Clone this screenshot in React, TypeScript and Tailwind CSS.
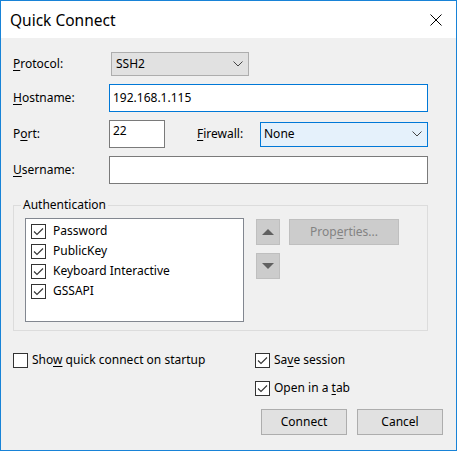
import type { ReactNode } from "react";

const Check = () => (
  <svg width="13" height="13" viewBox="0 0 13 13" className="block">
    <polyline
      points="2,6.5 5,9.5 11,3.5"
      fill="none"
      stroke="#333333"
      strokeWidth="1.1"
    />
  </svg>
);

const CheckBox = ({ checked }: { checked: boolean }) => (
  <div className="w-[15px] h-[15px] border border-[#333333] bg-white shrink-0">
    {checked && <Check />}
  </div>
);

const Key = ({ children }: { children: ReactNode }) => (
  <span className="underline underline-offset-[2px] decoration-1">{children}</span>
);

const Chevron = () => (
  <svg width="10" height="6" viewBox="0 0 10 6" className="block">
    <polyline points="0.5,0.5 5,5 9.5,0.5" fill="none" stroke="#444" strokeWidth="1" />
  </svg>
);

const authItems = ["Password", "PublicKey", "Keyboard Interactive", "GSSAPI"];

const App = () => {
  return (
    <div className="w-[457px] h-[451px] border border-[#1883d7] bg-[#f0f0f0] flex flex-col font-['Noto_Sans',sans-serif] text-[12px] leading-[16px] text-black">
      {/* title bar */}
      <div className="h-[37px] bg-white flex items-center justify-between pl-[9px] pr-[14px] shrink-0">
        <span className="text-[15.5px] leading-[20px]">Quick Connect</span>
        <svg width="12" height="12" viewBox="0 0 12 12" className="block">
          <path d="M0.5 0.5 L11.5 11.5 M11.5 0.5 L0.5 11.5" stroke="#000" strokeWidth="1" />
        </svg>
      </div>

      <div className="flex flex-col pl-[12px] pr-[28px] pt-[14px]">
        <div className="h-[24px] flex items-center">
          <span className="w-[96px]">
            <Key>P</Key>rotocol:
          </span>
          <div className="ml-[2px] w-[138px] h-[24px] border border-[#adadad] bg-[#e1e1e1] flex items-center justify-between pl-[4px] pr-[5px]">
            <span>SSH2</span>
            <Chevron />
          </div>
        </div>

        <div className="mt-[8px] h-[28px] flex items-center">
          <span className="w-[96px]">
            <Key>H</Key>ostname:
          </span>
          <div className="w-[319px] h-[28px] border border-[#0078d7] bg-white flex items-center pl-[3px]">
            192.168.1.115
          </div>
        </div>

        <div className="mt-[8px] h-[28px] flex items-center">
          <span className="w-[96px]">
            P<Key>o</Key>rt:
          </span>
          <div className="w-[56px] h-[28px] border border-[#7a7a7a] bg-white flex items-start pt-[2px] pl-[3px]">
            22
          </div>
          <span className="ml-[32px] w-[63px]">
            <Key>F</Key>irewall:
          </span>
          <div className="w-[168px] h-[25px] border border-[#0078d7] bg-[#e5f1fb] flex items-center justify-between pl-[3px] pr-[5px]">
            <span>None</span>
            <Chevron />
          </div>
        </div>

        <div className="mt-[8px] h-[28px] flex items-center">
          <span className="w-[96px]">
            <Key>U</Key>sername:
          </span>
          <div className="w-[319px] h-[28px] border border-[#7a7a7a] bg-white" />
        </div>

        {/* authentication group */}
        <div className="relative mt-[21px] w-[415px] h-[126px] border border-[#dcdcdc] flex items-start pt-[12px] pl-[11px]">
          <span className="absolute -top-[9px] left-[7px] bg-[#f0f0f0] px-[2px]">
            Authentication
          </span>
          <div className="w-[219px] h-[104px] border border-[#828790] bg-white flex flex-col pt-[2px] pl-[5px]">
            {authItems.map((item) => (
              <div key={item} className="h-[20px] flex items-center gap-[7px]">
                <CheckBox checked />
                <span>{item}</span>
              </div>
            ))}
          </div>
          <div className="ml-[12px] mt-[1px] flex flex-col gap-[8px]">
            <div className="w-[24px] h-[26px] border border-[#bfbfbf] bg-[#cccccc] flex items-center justify-center">
              <svg width="12" height="6" viewBox="0 0 12 6" className="block">
                <polygon points="6,0 12,6 0,6" fill="#606060" />
              </svg>
            </div>
            <div className="w-[24px] h-[26px] border border-[#bfbfbf] bg-[#cccccc] flex items-center justify-center">
              <svg width="12" height="6" viewBox="0 0 12 6" className="block">
                <polygon points="0,0 12,0 6,6" fill="#606060" />
              </svg>
            </div>
          </div>
          <div className="ml-[9px] mt-[1px] w-[110px] h-[26px] border border-[#bfbfbf] bg-[#cccccc] flex items-center justify-center text-[#838383]">
            Prop<Key>e</Key>rties...
          </div>
        </div>
      </div>

      {/* bottom area */}
      <div className="flex justify-between pl-[12px] pr-[13px]">
        <div className="mt-[19px] h-[20px] flex items-center gap-[4px]">
          <CheckBox checked={false} />
          <span>
            Sho<Key>w</Key> quick connect on startup
          </span>
        </div>
        <div className="w-[188px] flex flex-col">
          <div className="mt-[19px] h-[20px] flex items-center gap-[4px]">
            <CheckBox checked />
            <span>
              Sa<Key>v</Key>e session
            </span>
          </div>
          <div className="mt-[8px] h-[20px] flex items-center gap-[4px]">
            <CheckBox checked />
            <span>
              Open in a <Key>t</Key>ab
            </span>
          </div>
          <div className="mt-[11px] flex justify-end gap-[10px]">
            <div className="w-[86px] h-[26px] border border-[#adadad] bg-[#e1e1e1] flex items-center justify-center">
              Connect
            </div>
            <div className="w-[86px] h-[26px] border border-[#adadad] bg-[#e1e1e1] flex items-center justify-center">
              Cancel
            </div>
          </div>
        </div>
      </div>
    </div>
  );
};

export default App;
